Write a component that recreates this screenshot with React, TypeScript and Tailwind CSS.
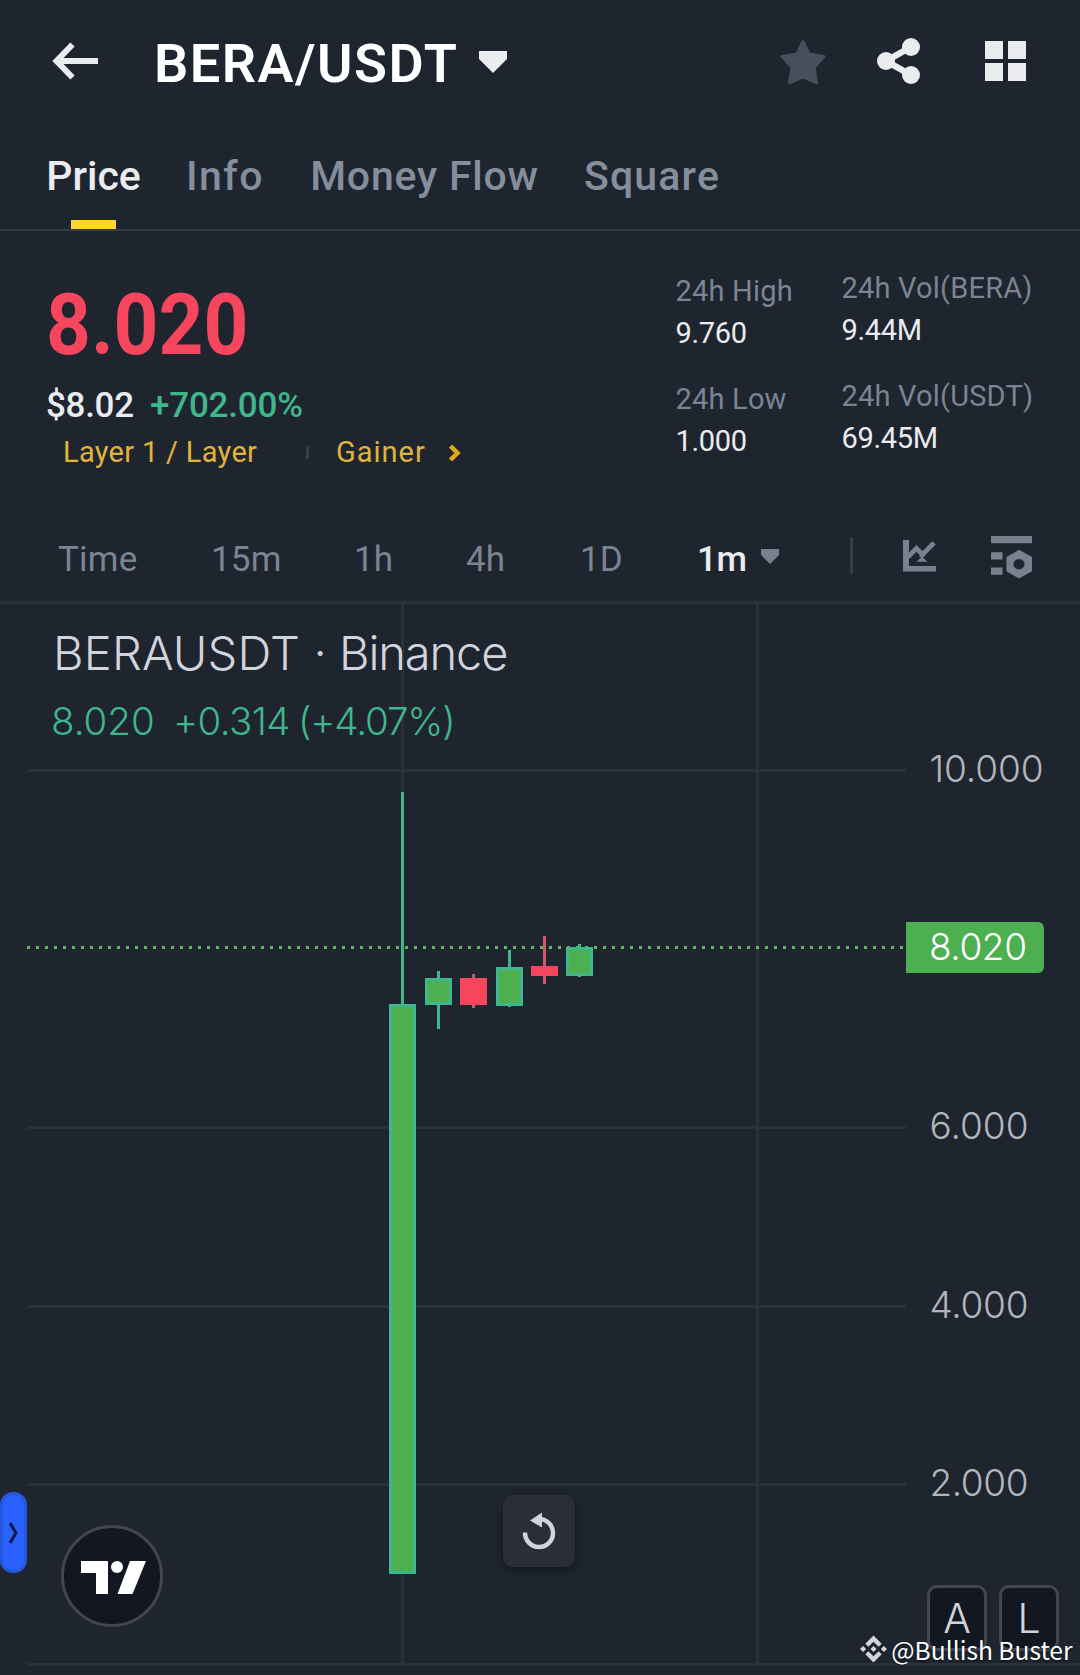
import { useState } from 'react';
import { clsx } from 'clsx';

const tabs = [
  { label: 'Price', width: 'w-[92px]', spacing: 'tracking-[0px]' },
  { label: 'Info', width: 'w-[78px]', spacing: 'tracking-[1.5px]' },
  { label: 'Money Flow', width: 'w-[228px]', spacing: 'tracking-[0.8px]' },
  { label: 'Square', width: 'w-[134px]', spacing: 'tracking-[1.2px]' },
];

const stats = [
  [
    { label: '24h High', value: '9.760' },
    { label: '24h Low', value: '1.000' },
  ],
  [
    { label: '24h Vol(BERA)', value: '9.44M' },
    { label: '24h Vol(USDT)', value: '69.45M' },
  ],
];

const intervals = [
  { label: 'Time', width: 'w-[153px]' },
  { label: '15m', width: 'w-[143px]' },
  { label: '1h', width: 'w-[112px]' },
  { label: '4h', width: 'w-[114px]' },
  { label: '1D', width: 'w-[117px]' },
];

// Chart coordinates, measured from just below the chart's top border
const priceLines = [
  { label: '10.000', y: 164, width: 111 },
  { label: '6.000', y: 521, width: 96 },
  { label: '4.000', y: 700, width: 96 },
  { label: '2.000', y: 878, width: 96 },
];

const candles = [
  { x: 389, open: 968, close: 398, high: 186, low: 968, up: true },
  { x: 425, open: 399, close: 372, high: 365, low: 423, up: true },
  { x: 460, open: 372, close: 399, high: 368, low: 402, up: false },
  { x: 496, open: 400, close: 361, high: 344, low: 401, up: true },
  { x: 531, open: 360, close: 370, high: 330, low: 378, up: false },
  { x: 566, open: 370, close: 341, high: 338, low: 371, up: true },
];

function Header() {
  return (
    <header className="flex h-[122px] items-center pl-[52px] pr-[54px] text-[#eaecef]">
      <svg className="h-[38px] w-[46px]" viewBox="0 0 46 38" fill="none" stroke="currentColor" strokeWidth="6">
        <path d="M46 19H5M20.500 2.500L4.500 19l16 16.500" />
      </svg>
      <h1 className="ml-[56px] w-[308px] whitespace-nowrap pt-1.5 text-[54px] font-semibold leading-none tracking-[1.5px] text-white">
        BERA/USDT
      </h1>
      <svg className="ml-[17px] mt-[2px] h-[22px] w-7" viewBox="0 0 28 22" fill="currentColor">
        <path d="M0 0h28v8L14 22 0 8z" />
      </svg>
      <div className="ml-auto flex items-center">
        <svg className="mt-[2px] h-[48px] w-[46px] text-[#474f5c]" viewBox="0 0 46 48" fill="currentColor" stroke="currentColor" strokeWidth="3" strokeLinejoin="round">
          <path d="M23 3.500l6 12.500 15 2.500-10 11 2.500 15.500L23 39 9.500 45 12 29.500 2 18.500 17 16z" />
        </svg>
        <svg className="ml-[51px] h-[48px] w-[43px]" viewBox="0 0 43 48" fill="currentColor" stroke="currentColor">
          <path d="M34 10L9 24l25 14" fill="none" strokeWidth="6.500" />
          <circle cx="9" cy="24" r="9" stroke="none" />
          <circle cx="34" cy="10" r="9" stroke="none" />
          <circle cx="34" cy="38" r="9" stroke="none" />
        </svg>
        <div className="ml-[65px] grid grid-cols-2 gap-x-[5px] gap-y-1">
          <span className="h-[18px] w-[18px] bg-[#eaecef]" />
          <span className="h-[18px] w-[18px] bg-[#eaecef]" />
          <span className="h-[18px] w-[18px] bg-[#eaecef]" />
          <span className="h-[18px] w-[18px] bg-[#eaecef]" />
        </div>
      </div>
    </header>
  );
}

function Tabs() {
  const [active, setActive] = useState('Price');

  return (
    <nav className="flex h-[109px] gap-[46.5px] border-b-2 border-[#333b47] pl-[47.5px] pt-[34px]">
      {tabs.map((tab) => (
        <button
          key={tab.label}
          onClick={() => setActive(tab.label)}
          className={clsx(
            'flex flex-col items-center justify-between whitespace-nowrap text-[41px] font-medium leading-none',
            tab.width,
            tab.spacing,
            active === tab.label ? 'text-[#eaecef]' : 'text-[#848e9c]'
          )}
        >
          {tab.label}
          {active === tab.label && <span className="h-[9px] w-[45px] bg-[#fcd535]" />}
        </button>
      ))}
    </nav>
  );
}

function Summary() {
  return (
    <section className="flex h-[283px] justify-between">
      <div className="pl-[46px] pt-[51px]">
        <div className="h-[86px] w-[220px] origin-left scale-x-[0.91] text-[86px] font-bold leading-none text-[#f6465d]">8.020</div>
        <div className="mt-[20px] flex h-[35px] text-[35px] font-medium leading-none">
          <span className="w-[104px] tracking-[-0.3px] text-[#eaecef]">$8.02</span>
          <span className="tracking-[-0.2px] text-[#3fb68b]">+702.00%</span>
        </div>
        <div className="mt-[15px] flex h-[29px] items-center text-[29px] leading-none text-[#e0b43a]">
          <span className="ml-[17px] w-[243px] whitespace-nowrap tracking-[0.3px]">Layer 1 / Layer</span>
          <span className="h-[13px] w-[3px] bg-[#353d49]" />
          <span className="ml-[27px] tracking-[1px]">Gainer</span>
          <svg className="ml-[23px] h-[18px] w-3" viewBox="0 0 12 18" fill="none" stroke="#e0a81c" strokeWidth="4.500">
            <path d="M1.500 2l7 7-7 7" />
          </svg>
        </div>
      </div>
      <div className="flex gap-[48px] pr-[44.5px]">
        {stats.map((column, i) => (
          <div key={i} className={clsx('flex flex-col gap-[37px]', i === 0 ? 'w-[118px] pt-[46px]' : 'w-[194px] pt-[43px]')}>
            {column.map((stat) => (
              <div key={stat.label} className="flex flex-col gap-[13px] whitespace-nowrap text-[29px] leading-none">
                <span className="tracking-[0.2px] text-[#7b8492]">{stat.label}</span>
                <span className="tracking-[-0.3px] text-[#eaecef]">{stat.value}</span>
              </div>
            ))}
          </div>
        ))}
      </div>
    </section>
  );
}

function IntervalBar() {
  return (
    <div className="flex h-[90px] border-b-[3px] border-[#29303a] pl-[58px] text-[35px] leading-none text-[#7b8492]">
      {intervals.map((interval) => (
        <button key={interval.label} className={clsx('h-[35px] pt-[28px] text-left tracking-[0.2px]', interval.width)}>
          {interval.label}
        </button>
      ))}
      <button className="flex h-[35px] w-[153px] pt-[28px] font-medium tracking-[-0.5px] text-[#eaecef]">
        1m
        <svg className="ml-[15px] mt-[7px] h-[15px] w-[18px] text-[#78818f]" viewBox="0 0 18 15" fill="currentColor">
          <path d="M0 0h18v6L9 15 0 6z" />
        </svg>
      </button>
      <span className="mt-[23px] h-[37px] w-[3px] bg-[#353d49]" />
      <svg className="ml-[49.5px] mt-[26px] h-[32px] w-[33px]" viewBox="0 0 33 34" preserveAspectRatio="none" fill="none" stroke="#78818f">
        <path d="M3 0v30.500h30" strokeWidth="6" />
        <path d="M5 18l8.500-9 6 6.500L31 3" strokeWidth="5" />
        <path d="M19 14l-3 3.500 3 1 3-1zM19 17.500l-5.500 5.500h11z" fill="#78818f" stroke="none" />
      </svg>
      <svg className="ml-[55px] mt-[22px] h-[43px] w-[41px]" viewBox="0 0 41 45" preserveAspectRatio="none" fill="#78818f">
        <path d="M0 0h41v7.500H0zM0 17h11.500v7.500H0zM0 33h11.500v7.500H0z" />
        <path fillRule="evenodd" d="M28 14.500l13 7.500v15l-13 7.500L15.500 37V22zM28 24a5.500 5.500 0 1 0 .01 0z" />
      </svg>
    </div>
  );
}

function Candle({ candle }: { candle: (typeof candles)[number] }) {
  const top = Math.min(candle.open, candle.close);
  const height = Math.abs(candle.open - candle.close);
  const line = candle.up ? '#3fb68b' : '#d4566a';

  return (
    <g>
      <rect x={candle.x + 12} y={candle.high} width="3" height={candle.low - candle.high} fill={line} />
      <rect x={candle.x} y={top} width="27" height={height} fill={candle.up ? '#3fb68b' : '#f6465d'} />
      {candle.up && <rect x={candle.x + 3} y={top + 3} width="21" height={height - 6} fill="#4caf50" />}
    </g>
  );
}

function Chart() {
  return (
    <section className="relative h-[1071px] overflow-hidden font-['Inter',sans-serif] font-light">
      <svg className="block h-[1071px] w-[1080px]" viewBox="0 -2 1080 1071">
        <g fill="#2a313b">
          <rect x="401" y="-2" width="3" height="1060" />
          <rect x="756" y="-2" width="3" height="1060" />
          {priceLines.map((line) => (
            <rect key={line.label} x="27" y={line.y - 1} width="879" height="3" />
          ))}
          <rect x="27" y="1057" width="1053" height="3" />
        </g>
        <line x1="27" x2="906" y1="341.500" y2="341.500" stroke="#5dbb63" strokeWidth="3" strokeDasharray="3 6" />
        {candles.map((candle) => (
          <Candle key={candle.x} candle={candle} />
        ))}
        <path d="M906 316h132a6 6 0 0 1 6 6v39a6 6 0 0 1-6 6H906z" fill="#4caf50" />
        <g fontSize="37">
          {priceLines.map((line) => (
            <text key={line.label} x="929.500" y={line.y + 12} textLength={line.width + 3} fill="#b2b5be">
              {line.label}
            </text>
          ))}
          <text x="929" y="354" textLength="98" fill="#fff">
            8.020
          </text>
        </g>
      </svg>

      {/* Legend */}
      <div className="absolute left-[53px] top-[19px] whitespace-nowrap text-[47px] leading-[60px] text-[#d1d4dc]">
        <span className="tracking-[0.2px]">BERAUSDT ·</span>
        <span className="tracking-[-1.1px]"> Binance</span>
      </div>
      <div className="absolute left-[51px] top-[93px] flex whitespace-nowrap text-[38.5px] leading-[48px] text-[#3fb68b]">
        <span className="w-[122px]">8.020</span>
        <span className="w-[125px] tracking-[-0.6px]">+0.314</span>
        <span className="tracking-[-1.1px]">(+4.07%)</span>
      </div>

      {/* Side drawer handle */}
      <button className="absolute left-0 top-[888px] flex h-[81px] w-[27px] items-center justify-center rounded-[13px] border-[3px] border-[#2557e0] bg-[#2962ff]">
        <svg className="h-[22px] w-[9px]" viewBox="0 0 9 22" fill="none" stroke="#0e1a45" strokeWidth="3">
          <path d="M1 1l6 10-6 10" />
        </svg>
      </button>

      {/* TradingView mark */}
      <div className="absolute left-[61px] top-[921px] flex h-[102px] w-[102px] items-center justify-center rounded-full border-[3px] border-[#434651] bg-[#131722]">
        <svg className="ml-[2px] mt-[2px] h-[33px] w-[65px]" viewBox="0 0 65 33" fill="#fff">
          <path d="M0 0h27v33H15V12H0zM49 0h16L51.500 33h-15z" />
          <circle cx="36" cy="6" r="6" />
        </svg>
      </div>

      <button className="absolute left-[503px] top-[891px] flex h-[72px] w-[72px] items-center justify-center rounded-[10px] bg-[#2a2e39] shadow-[0_4px_10px_rgba(0,0,0,0.35)]">
        <svg className="h-[40px] w-[36px]" viewBox="0 0 36 40" fill="none" stroke="#d1d4dc" strokeWidth="4.500">
          <path d="M4 21.500a14 14 0 1 0 14-13.500" />
          <path d="M9 9.500L21 1.500v15z" fill="#d1d4dc" stroke="none" />
        </svg>
      </button>

      {/* Scale toggles */}
      <div className="absolute left-[927px] top-[981px] flex gap-3 text-[41px] leading-none text-[#d1d4dc]">
        <button className="h-[66px] w-[60px] rounded-[10px] border-[3px] border-[#434651] bg-[#131722]">A</button>
        <button className="h-[66px] w-[60px] rounded-[10px] border-[3px] border-[#434651] bg-[#131722]">L</button>
      </div>

      {/* Watermark */}
      <div className="absolute right-[7.5px] top-[1027px] flex items-center gap-1 font-['Noto_Sans_CJK_SC',sans-serif] text-[24.6px] font-normal leading-[36px] text-white">
        <svg className="h-7 w-[27px]" viewBox="0 0 28 28" fill="#d4d5d8">
          <path d="M14 0l8.500 8.500-3.200 3.200L14 6.400l-5.300 5.300-3.200-3.200zM3.200 10.800L6.400 14l-3.200 3.200L0 14zM14 10.800l3.200 3.200-3.200 3.200-3.200-3.200zM24.800 10.800L28 14l-3.200 3.200-3.200-3.200zM8.700 16.300l5.300 5.300 5.300-5.300 3.200 3.200L14 28l-8.500-8.500z" />
        </svg>
        <span className="[text-shadow:0_1px_2px_rgba(0,0,0,0.6)]">@Bullish Buster</span>
      </div>
    </section>
  );
}

export default function App() {
  return (
    <div className="h-[1675px] w-[1080px] overflow-hidden bg-[#1e252f] font-['Roboto',sans-serif]">
      <Header />
      <Tabs />
      <Summary />
      <IntervalBar />
      <Chart />
    </div>
  );
}
